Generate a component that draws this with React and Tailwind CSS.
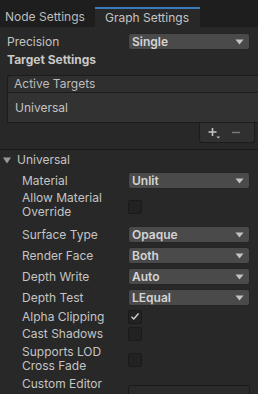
import React from 'react'

function Arrow(){
  return (
    <svg width="9" height="6" viewBox="0 0 9 6" className="shrink-0">
      <path d="M0.5 0.5 L8.5 0.5 L4.5 5.5 Z" fill="#c4c4c4" />
    </svg>
  )
}

function Dropdown({ value }){
  return (
    <div className="flex items-center justify-between w-[122px] h-[17px] rounded-[3px] bg-[#4a4a4a] border border-[#252525] pl-[3px] pr-[5px]">
      <span className="font-semibold text-[#d4d4d4] leading-none">{value}</span>
      <Arrow />
    </div>
  )
}

function Checkbox({ checked }){
  return (
    <div className="w-[14px] h-[14px] rounded-[2px] bg-[#222222] border border-[#1a1a1a] flex items-center justify-center">
      {checked && (
        <svg width="10" height="9" viewBox="0 0 10 9">
          <path d="M1.5 4.8 L3.8 7 L8.5 1.5" stroke="#d0d0d0" strokeWidth="1.4" fill="none" />
        </svg>
      )}
    </div>
  )
}

function DropRow({ label, value }){
  return (
    <div className="flex items-center h-[21px] pl-[22px]">
      <span className="w-[106px] text-[#c4c4c4]">{label}</span>
      <Dropdown value={value} />
    </div>
  )
}

export default function App(){

  return (

    <div
      className="w-[258px] h-[394px] bg-[#282828] overflow-hidden text-[12px] leading-[14px]"
      style={{ fontFamily: 'Inter, "Noto Sans", sans-serif' }}
    >

      {/* tabs */}

      <div className="h-[27px] bg-[#1e1e1e] flex items-end">
        <div className="w-[95px] h-[20px] flex items-center pl-[5px] text-[#bdbdbd]">
          Node Settings
        </div>
        <div className="w-[105px] h-[20px] flex items-center pl-[10px] bg-[#282828] border-t-2 border-[#3a79bb] text-[#c4c4c4]">
          Graph Settings
        </div>
      </div>

      {/* precision */}

      <div className="flex items-center h-[21px] mt-[4px] pl-[7px]">
        <span className="w-[121px] text-[#c4c4c4]">Precision</span>
        <Dropdown value="Single" />
      </div>

      <div className="h-[16px] flex items-center pl-[7px] font-bold text-[#c8c8c8]">
        Target Settings
      </div>

      {/* active targets */}

      <div className="mt-[7px] ml-[7px]">
        <div className="w-[260px] rounded-tl-[3px] border border-r-0 border-[#1c1c1c] bg-[#2f2f2f]">
          <div className="h-[17px] flex items-center pl-[6px] text-[#bdbdbd] border-b border-[#1c1c1c]">
            Active Targets
          </div>
          <div className="h-[29px] flex items-center pl-[7px] text-[#c4c4c4] bg-[#323232]">
            Universal
          </div>
        </div>
        <div className="flex justify-end pr-[3px]">
          <div className="w-[56px] h-[20px] bg-[#303030] border border-t-0 border-[#1c1c1c] rounded-b-[3px] flex items-center pl-[8px] gap-[10px]">
            <svg width="14" height="12" viewBox="0 0 14 12">
              <path d="M4.5 1 V9 M0.5 5 H8.5" stroke="#c4c4c4" strokeWidth="1.6" />
              <path d="M8.5 9.5 H12 L10.25 11.5 Z" fill="#c4c4c4" />
            </svg>
            <svg width="9" height="3" viewBox="0 0 9 3">
              <path d="M0 1.5 H8" stroke="#777777" strokeWidth="1.5" />
            </svg>
          </div>
        </div>
      </div>

      <div className="mt-[6px] h-px bg-[#1a1a1a]" />

      {/* universal foldout */}

      <div className="h-[20px] flex items-center pl-[3px] gap-[6px] text-[#c4c4c4]">
        <svg width="8" height="7" viewBox="0 0 8 7">
          <path d="M0 0.5 H8 L4 6.5 Z" fill="#999999" />
        </svg>
        <span>Universal</span>
      </div>

      <DropRow label="Material" value="Unlit" />

      <div className="flex items-start h-[33px] pl-[22px]">
        <span className="w-[106px] text-[#c4c4c4]">Allow Material<br />Override</span>
        <div className="mt-[9px]"><Checkbox /></div>
      </div>

      <DropRow label="Surface Type" value="Opaque" />
      <DropRow label="Render Face" value="Both" />
      <DropRow label="Depth Write" value="Auto" />
      <DropRow label="Depth Test" value="LEqual" />

      <div className="flex items-center h-[17px] pl-[22px]">
        <span className="w-[106px] text-[#c4c4c4]">Alpha Clipping</span>
        <Checkbox checked />
      </div>

      <div className="flex items-center h-[17px] pl-[22px]">
        <span className="w-[106px] text-[#c4c4c4]">Cast Shadows</span>
        <Checkbox />
      </div>

      <div className="flex items-start h-[33px] pl-[22px]">
        <span className="w-[106px] pt-[3px] text-[#c4c4c4]">Supports LOD<br />Cross Fade</span>
        <div className="mt-[11px]"><Checkbox /></div>
      </div>

      <div className="flex items-start pl-[22px]">
        <span className="w-[106px] pt-[2px] text-[#c4c4c4]">Custom Editor</span>
        <div className="mt-[10px] w-[122px] h-[18px] rounded-[3px] bg-[#2a2a2a] border border-[#1a1a1a]" />
      </div>

    </div>

  )

}
